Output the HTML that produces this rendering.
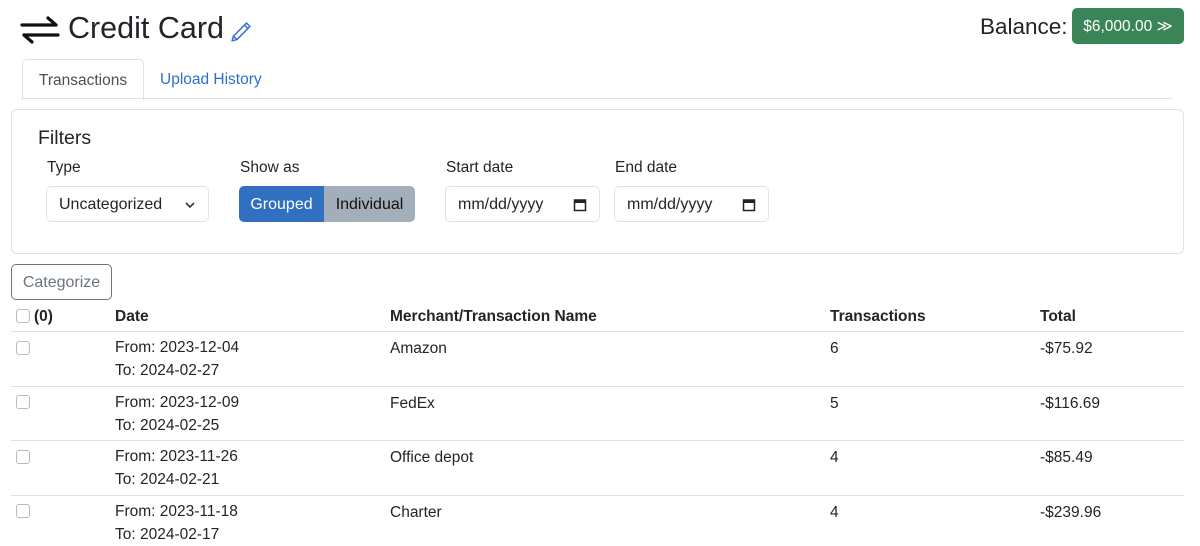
<!DOCTYPE html>
<html><head><meta charset="utf-8"><style>
*{box-sizing:border-box;margin:0;padding:0}
body{width:1200px;height:546px;overflow:hidden;background:#fff;font-family:"Liberation Sans",sans-serif;color:#212529;font-size:15.5px;position:relative}
.a{position:absolute}
.lbl{font-size:15.5px}
.inp{border:1px solid #dee2e6;border-radius:5px;background:#fff;height:36px;display:flex;align-items:center;padding:1px 12px 0;font-size:16px}
.cb{width:14px;height:14px;border:1px solid #b8bcc0;border-radius:3px;background:#fff}
.th{font-weight:bold;font-size:15.5px}
.hr{position:absolute;left:11px;width:1173px;height:1px;background:#dee2e6}
</style></head><body>
<svg class="a" style="left:20px;top:16px" width="40" height="28" viewBox="0 0 40 28"><path d="M2 9H36M28 2L36 9M38 19H4M12 26L4 19" stroke="#111" stroke-width="3.2" fill="none" stroke-linecap="round" stroke-linejoin="round"/></svg>
<div class="a" style="left:68px;top:11px;font-size:30.5px;color:#212529">Credit Card</div>
<svg class="a" style="left:230px;top:21px" width="22" height="22" viewBox="0 0 16 16"><path d="M12 1.5l2.5 2.5L5 13.5 1.5 14.5 2.5 11z M10.5 3l2.5 2.5 M2.5 11l2.5 2.5" stroke="#3b6fd0" stroke-width="1.1" fill="none" stroke-linejoin="round"/></svg>
<div class="a" style="left:980px;top:14px;font-size:22.5px">Balance:</div>
<div class="a" style="left:1072px;top:8px;width:112px;height:36px;background:#3a8558;border-radius:5px;color:#fff;font-size:15.5px;display:flex;align-items:center;justify-content:center;padding-top:1px">$6,000.00 ≫</div>
<div class="a" style="left:22px;top:59px;width:122px;height:41px;border:1px solid #dee2e6;border-bottom:none;border-radius:5px 5px 0 0;background:#fff;text-align:center;line-height:41px;color:#495057">Transactions</div>
<div class="a" style="left:160px;top:71px;color:#2f6fc7">Upload History</div>
<div class="a" style="left:22px;top:98px;width:1150px;height:1px;background:#dee2e6"></div>
<div class="a" style="left:11px;top:109px;width:1173px;height:145px;border:1px solid #dee2e6;border-radius:6px"></div>
<div class="a" style="left:38px;top:127px;font-size:19.5px">Filters</div>
<div class="a lbl" style="left:47px;top:159px">Type</div>
<div class="a inp" style="left:46px;top:186px;width:163px;justify-content:space-between">Uncategorized<svg width="12" height="8" viewBox="0 0 12 8"><path d="M2 2l4 4 4-4" stroke="#333" stroke-width="1.6" fill="none"/></svg></div>
<div class="a lbl" style="left:240px;top:159px">Show as</div>
<div class="a" style="left:239px;top:186px;width:85px;height:36px;background:#3170c0;border-radius:5px 0 0 5px;color:#fff;text-align:center;line-height:38px;font-size:16px">Grouped</div>
<div class="a" style="left:324px;top:186px;width:91px;height:36px;background:#a3aebb;border-radius:0 5px 5px 0;color:#111;text-align:center;line-height:38px;font-size:16px">Individual</div>
<div class="a lbl" style="left:446px;top:159px">Start date</div>
<div class="a inp" style="left:445px;top:186px;width:155px;justify-content:space-between">mm/dd/yyyy<svg width="14" height="14" viewBox="0 0 14 14"><rect x="1.5" y="2" width="11" height="10.5" fill="none" stroke="#222" stroke-width="1.5"/><rect x="1.5" y="2" width="11" height="3" fill="#222"/></svg></div>
<div class="a lbl" style="left:615px;top:159px">End date</div>
<div class="a inp" style="left:614px;top:186px;width:155px;justify-content:space-between">mm/dd/yyyy<svg width="14" height="14" viewBox="0 0 14 14"><rect x="1.5" y="2" width="11" height="10.5" fill="none" stroke="#222" stroke-width="1.5"/><rect x="1.5" y="2" width="11" height="3" fill="#222"/></svg></div>
<div class="a" style="left:11px;top:264px;width:101px;height:36px;border:1px solid #6c757d;border-radius:5px;color:#6c757d;text-align:center;line-height:36px;font-size:16px">Categorize</div>
<div class="a cb" style="left:16px;top:309px"></div>
<div class="a th" style="left:34px;top:308px">(0)</div>
<div class="a th" style="left:115px;top:308px">Date</div>
<div class="a th" style="left:390px;top:308px">Merchant/Transaction Name</div>
<div class="a th" style="left:830px;top:308px">Transactions</div>
<div class="a th" style="left:1040px;top:308px">Total</div>
<div class="hr" style="top:331px"></div>
<div class="a cb" style="left:16px;top:341px"></div>
<div class="a" style="left:115px;top:336px;line-height:23px">From: 2023-12-04<br>To: 2024-02-27</div>
<div class="a" style="left:390px;top:340px">Amazon</div><div class="a" style="left:830px;top:340px">6</div><div class="a" style="left:1040px;top:340px">-$75.92</div>
<div class="hr" style="top:386px"></div>
<div class="a cb" style="left:16px;top:395px"></div>
<div class="a" style="left:115px;top:391px;line-height:23px">From: 2023-12-09<br>To: 2024-02-25</div>
<div class="a" style="left:390px;top:395px">FedEx</div><div class="a" style="left:830px;top:395px">5</div><div class="a" style="left:1040px;top:395px">-$116.69</div>
<div class="hr" style="top:440px"></div>
<div class="a cb" style="left:16px;top:450px"></div>
<div class="a" style="left:115px;top:445px;line-height:23px">From: 2023-11-26<br>To: 2024-02-21</div>
<div class="a" style="left:390px;top:449px">Office depot</div><div class="a" style="left:830px;top:449px">4</div><div class="a" style="left:1040px;top:449px">-$85.49</div>
<div class="hr" style="top:495px"></div>
<div class="a cb" style="left:16px;top:504px"></div>
<div class="a" style="left:115px;top:500px;line-height:23px">From: 2023-11-18<br>To: 2024-02-17</div>
<div class="a" style="left:390px;top:504px">Charter</div><div class="a" style="left:830px;top:504px">4</div><div class="a" style="left:1040px;top:504px">-$239.96</div>
</body></html>
